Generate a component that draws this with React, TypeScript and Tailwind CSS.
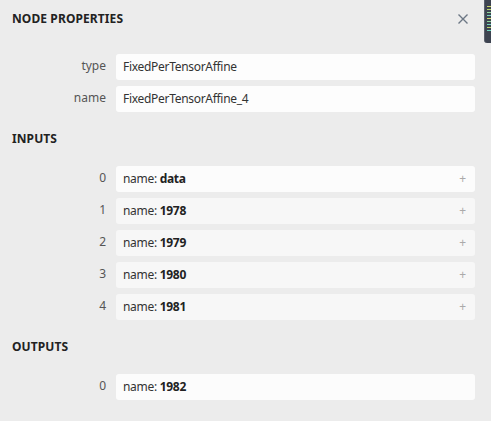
import React from 'react';

const font = { fontFamily: '"Noto Sans", "Open Sans", Arial, sans-serif' };

const inputs = [
  { index: '0', value: 'data', light: true },
  { index: '1', value: '1978' },
  { index: '2', value: '1979' },
  { index: '3', value: '1980' },
  { index: '4', value: '1981' },
];

const stripes = ['#c9d46a', '#b8d46a', '#8fd49a', '#6fd4c0', '#c9d46a', '#8fd49a', '#6fd4c0', '#b8d46a', '#6fd4c0'];

const Section: React.FC<{ title: string }> = ({ title }) => (
  <div className="h-[54px] flex items-center px-3">
    <span className="text-[12px] font-bold text-[#222] tracking-[0.1px]">{title}</span>
  </div>
);

const Row: React.FC<{ label: string; children: React.ReactNode; bg?: string; plus?: boolean }> = ({
  label,
  children,
  bg = 'bg-[#fdfdfd]',
  plus,
}) => (
  <div className="flex items-center h-[26px] mb-[6px]">
    <div className="w-[106px] text-right text-[12px] text-[#555] pb-[3px]">{label}</div>
    <div className={`ml-[10px] w-[359px] h-[26px] rounded-[3px] ${bg} flex items-center pl-[7px] pr-[9px] text-[12px] text-[#333]`}>
      <div className="flex-1 whitespace-nowrap tracking-[-0.3px]">{children}</div>
      {plus && <span className="text-[12px] text-[#aaa] leading-none">+</span>}
    </div>
  </div>
);

export default function App() {
  return (
    <div className="relative w-[491px] h-[421px] bg-[#ececec] overflow-hidden" style={font}>
      {/* header */}
      <div className="h-[38px] flex items-center justify-between pl-3 pr-[22px]">
        <span className="text-[12px] font-bold text-[#222] tracking-[0.1px]">NODE PROPERTIES</span>
        <svg width="12" height="12" viewBox="0 0 12 12" className="text-[#6c7785]">
          <path d="M1.5 1.5 L10.5 10.5 M10.5 1.5 L1.5 10.5" stroke="currentColor" strokeWidth="1.4" />
        </svg>
      </div>
      <div className="h-[16px]" />

      <Row label="type">FixedPerTensorAffine</Row>
      <Row label="name">FixedPerTensorAffine_4</Row>

      <div className="-mt-[6px]" />
      <Section title="INPUTS" />
      {inputs.map((i) => (
        <Row key={i.index} label={i.index} bg={i.light ? 'bg-[#fcfcfc]' : 'bg-[#f7f7f7]'} plus>
          name: <span className="font-bold text-[#222]">{i.value}</span>
        </Row>
      ))}

      <div className="-mt-[6px]" />
      <Section title="OUTPUTS" />
      <Row label="0" bg="bg-[#fcfcfc]">
        name: <span className="font-bold text-[#222]">1982</span>
      </Row>

      {/* editor minimap peeking at the right edge */}
      <div className="absolute top-0 right-0 w-[7px] h-[43px] bg-[#3d4350] rounded-bl-[3px] border-l border-[#5a606c] flex flex-col gap-[2px] pt-[6px] pl-[2px]">
        {stripes.map((c, k) => (
          <div key={k} className="h-[1px] w-[5px]" style={{ backgroundColor: c }} />
        ))}
      </div>
    </div>
  );
}
